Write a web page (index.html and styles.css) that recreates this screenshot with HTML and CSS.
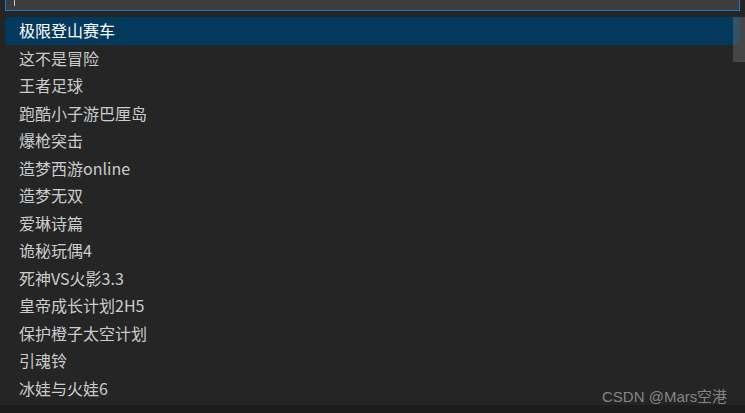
FILE: index.html
```html
<!DOCTYPE html>
<html lang="zh-CN">
<head>
<meta charset="utf-8">
<title>Quick pick</title>
<link rel="stylesheet" href="styles.css">
</head>
<body>
<div class="page">
  <div class="panel">
    <div class="input"><span class="cursor"></span></div>
    <ul class="list">
      <li class="item selected">极限登山赛车</li>
      <li class="item">这不是冒险</li>
      <li class="item">王者足球</li>
      <li class="item">跑酷小子游巴厘岛</li>
      <li class="item">爆枪突击</li>
      <li class="item">造梦西游online</li>
      <li class="item">造梦无双</li>
      <li class="item">爱琳诗篇</li>
      <li class="item">诡秘玩偶4</li>
      <li class="item">死神VS火影3.3</li>
      <li class="item">皇帝成长计划2H5</li>
      <li class="item">保护橙子太空计划</li>
      <li class="item">引魂铃</li>
      <li class="item">冰娃与火娃6</li>
    </ul>
    <div class="scrollbar"></div>
    <div class="watermark">CSDN @Mars空港</div>
  </div>
  <div class="footer"></div>
</div>
</body>
</html>
```
FILE: styles.css
```css
html, body {
  margin: 0;
  padding: 0;
  background: #252526;
  overflow: hidden;
}
.page {
  width: 745px;
  height: 413px;
  display: flex;
  flex-direction: column;
}
.panel {
  position: relative;
  height: 405px;
  overflow: hidden;
  background: #252526;
}
.input {
  margin-left: 5px;
  width: 733px;
  height: 10px;
  background: #3c3c3c;
  border: 1px solid #0e7fd2;
  border-top: none;
  position: relative;
}
.cursor {
  position: absolute;
  left: 8px;
  top: 0;
  width: 1px;
  height: 6px;
  background: #c8c8c8;
}
.list {
  list-style: none;
  margin: 6px 0 0 0;
  padding: 0;
}
.item {
  margin: 0 5px;
  height: 27.5px;
  line-height: 27.5px;
  padding-left: 14px;
  font-family: "Noto Sans CJK SC", "Noto Sans", sans-serif;
  font-size: 16px;
  color: #cccccc;
  white-space: nowrap;
}
.item.selected {
  background: #04395e;
  color: #ffffff;
  border-radius: 4px;
}
.scrollbar {
  position: absolute;
  top: 17px;
  right: 0;
  width: 12px;
  height: 45px;
  background: rgba(121, 121, 121, 0.4);
}
.watermark {
  position: absolute;
  left: 602px;
  top: 385px;
  font-family: "Liberation Sans", Arial, sans-serif;
  font-size: 15px;
  color: rgba(190, 190, 190, 0.65);
  white-space: nowrap;
}
.footer {
  height: 8px;
  background: #1c1c1c;
}
```
